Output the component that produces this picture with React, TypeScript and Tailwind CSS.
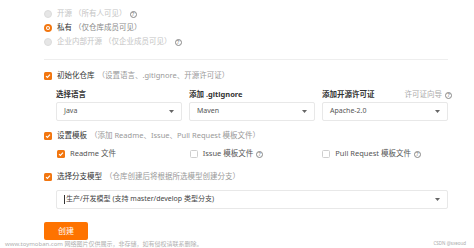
import React from "react";

const font = { fontFamily: '"Noto Sans", "Noto Sans CJK SC", sans-serif' };

function Help() {
  return (
    <span className="inline-flex items-center justify-center w-[7px] h-[7px] rounded-full border border-[#888] text-[5px] leading-none text-[#666] ml-[3px]">
      ?
    </span>
  );
}

function Check({ on }: { on: boolean }) {
  return on ? (
    <span className="w-[8px] h-[8px] rounded-[1.5px] bg-[#f2760f] flex items-center justify-center shrink-0">
      <svg width="6" height="6" viewBox="0 0 6 6">
        <path d="M1 3.1 L2.4 4.4 L5 1.6" stroke="#fff" strokeWidth="1.1" fill="none" />
      </svg>
    </span>
  ) : (
    <span className="w-[8px] h-[8px] rounded-[1.5px] border border-[#cfcfcf] bg-white shrink-0" />
  );
}

function Radio({ state }: { state: "on" | "dis" }) {
  return state === "on" ? (
    <span className="w-[8px] h-[8px] rounded-full bg-[#f2760f] flex items-center justify-center shrink-0">
      <span className="w-[4px] h-[4px] rounded-full bg-white flex items-center justify-center">
        <span className="w-[2px] h-[2px] rounded-full bg-[#f2760f]" />
      </span>
    </span>
  ) : (
    <span className="w-[8px] h-[8px] rounded-full bg-[#e6e6e6] border border-[#dcdcdc] shrink-0" />
  );
}

function Caret() {
  return (
    <svg width="5" height="3" viewBox="0 0 5 3">
      <path d="M0 0 L5 0 L2.5 3 Z" fill="#666" />
    </svg>
  );
}

function Select({ text }: { text: string }) {
  return (
    <div className="h-[19px] border border-[#e8e8e8] rounded-[2px] flex items-center justify-between pl-[7px] pr-[7px] text-[7px] text-[#555]">
      <span>{text}</span>
      <Caret />
    </div>
  );
}

export default function App() {
  return (
    <div className="w-[474px] h-[248px] bg-white relative overflow-hidden" style={font}>
      <div className="pl-[44px] pt-[7px] w-[448px]">
        <div className="h-[14px] flex items-center gap-[5px] text-[7.5px] text-[#c4c4c4]">
          <Radio state="dis" />
          <span className="flex items-center">开源<span className="ml-[2px]">（所有人可见）</span><Help /></span>
        </div>
        <div className="h-[14px] flex items-center gap-[5px] text-[7.5px]">
          <Radio state="on" />
          <span className="text-[#333]">私有<span className="ml-[2px] text-[#888]">（仅仓库成员可见）</span></span>
        </div>
        <div className="h-[14px] flex items-center gap-[5px] text-[7.5px] text-[#c4c4c4]">
          <Radio state="dis" />
          <span className="flex items-center">企业内部开源<span className="ml-[2px]">（仅企业成员可见）</span><Help /></span>
        </div>
        <div className="mt-[10px] h-px bg-[#eeeeee]" />

        <div className="mt-[9px] h-[14px] flex items-center gap-[5px] text-[7.5px]">
          <Check on />
          <span className="text-[#333]">初始化仓库<span className="ml-[3px] text-[#999]">（设置语言、.gitignore、开源许可证）</span></span>
        </div>
        <div className="pl-[12px]">
          <div className="grid grid-cols-3 gap-x-[7px]">
            <div className="mt-[7px] h-[10px] flex items-center text-[7.5px] font-bold text-[#333]">选择语言</div>
            <div className="mt-[7px] h-[10px] flex items-center text-[7.5px] font-bold text-[#333]">添加 .gitignore</div>
            <div className="mt-[7px] h-[10px] flex items-center justify-between text-[7.5px]">
              <span className="font-bold text-[#333]">添加开源许可证</span>
              <span className="flex items-center text-[#aaa] mr-[-4px]">许可证向导<Help /></span>
            </div>
            <div className="mt-[2px]"><Select text="Java" /></div>
            <div className="mt-[2px]"><Select text="Maven" /></div>
            <div className="mt-[2px]"><Select text="Apache-2.0" /></div>
          </div>
        </div>

        <div className="mt-[8px] h-[14px] flex items-center gap-[5px] text-[7.5px]">
          <Check on />
          <span className="text-[#333]">设置模板<span className="ml-[3px] text-[#999]">（添加 Readme、Issue、Pull Request 模板文件）</span></span>
        </div>
        <div className="pl-[13px] mt-[4px] grid grid-cols-3 gap-x-[7px] text-[7.5px] text-[#555]">
          <div className="h-[14px] flex items-center gap-[5px]">
            <Check on />
            <span>Readme 文件</span>
          </div>
          <div className="h-[14px] flex items-center gap-[5px]">
            <Check on={false} />
            <span className="flex items-center">Issue 模板文件<Help /></span>
          </div>
          <div className="h-[14px] flex items-center gap-[5px]">
            <Check on={false} />
            <span className="flex items-center">Pull Request 模板文件<Help /></span>
          </div>
        </div>

        <div className="mt-[9px] h-[14px] flex items-center gap-[5px] text-[7.5px]">
          <Check on />
          <span className="text-[#333]">选择分支模型<span className="ml-[3px] text-[#999]">（仓库创建后将根据所选模型创建分支）</span></span>
        </div>
        <div className="pl-[12px] mt-[6px]">
          <div className="h-[19px] border border-[#e8e8e8] rounded-[2px] flex items-center justify-between pl-[7px] pr-[7px] text-[7px] text-[#444]">
            <span className="flex items-center">
              <span className="w-px h-[9px] bg-[#333] mr-px" />
              生产/开发模型 (支持 master/develop 类型分支)
            </span>
            <Caret />
          </div>
        </div>

        <button className="mt-[13px] w-[44px] h-[18px] bg-[#fe7300] text-white text-[8px] rounded-[2px] flex items-center justify-center">
          创建
        </button>
      </div>

      <div className="absolute left-[5px] bottom-[1px] text-[6px] text-[#b0b0b0] leading-none">
        www.toymoban.com 网络图片仅供展示，非存储，如有侵权请联系删除。
      </div>
      <div className="absolute right-[8px] bottom-[3px] text-[4.5px] text-[#aaa] leading-none">
        CSDN @sxeoud
      </div>
    </div>
  );
}
